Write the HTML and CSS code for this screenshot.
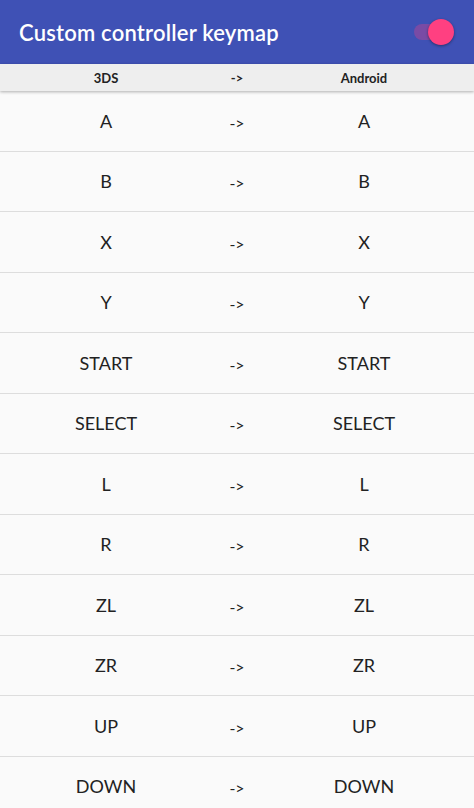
FILE: index.html
```html
<!DOCTYPE html>
<html lang="en">
<head>
    <meta charset="UTF-8">
    <meta name="viewport" content="width=device-width, initial-scale=1.0">
    <title>Custom controller keymap</title>
    <link rel="stylesheet" href="styles.css">
</head>
<body>
    <div class="toolbar">
        <h1 class="titulo">Custom controller keymap</h1>
        <div class="switch">
            <span class="track"></span>
            <span class="thumb"></span>
        </div>
    </div>

    <div class="cabecalho">
        <span class="col">3DS</span>
        <span class="seta">-&gt;</span>
        <span class="col">Android</span>
    </div>

    <div class="lista">
        <div class="linha"><span class="col">A</span><span class="seta">-&gt;</span><span class="col">A</span></div>
        <div class="linha"><span class="col">B</span><span class="seta">-&gt;</span><span class="col">B</span></div>
        <div class="linha"><span class="col">X</span><span class="seta">-&gt;</span><span class="col">X</span></div>
        <div class="linha"><span class="col">Y</span><span class="seta">-&gt;</span><span class="col">Y</span></div>
        <div class="linha"><span class="col">START</span><span class="seta">-&gt;</span><span class="col">START</span></div>
        <div class="linha"><span class="col">SELECT</span><span class="seta">-&gt;</span><span class="col">SELECT</span></div>
        <div class="linha"><span class="col">L</span><span class="seta">-&gt;</span><span class="col">L</span></div>
        <div class="linha"><span class="col">R</span><span class="seta">-&gt;</span><span class="col">R</span></div>
        <div class="linha"><span class="col">ZL</span><span class="seta">-&gt;</span><span class="col">ZL</span></div>
        <div class="linha"><span class="col">ZR</span><span class="seta">-&gt;</span><span class="col">ZR</span></div>
        <div class="linha"><span class="col">UP</span><span class="seta">-&gt;</span><span class="col">UP</span></div>
        <div class="linha"><span class="col">DOWN</span><span class="seta">-&gt;</span><span class="col">DOWN</span></div>
    </div>
</body>
</html>
```

FILE: styles.css
```css
body {
    font-family: Lato, "Open Sans", sans-serif;
    background-color: #fafafa;
    margin: 0;
    height: 808px;
    overflow: hidden;
    color: #222222;
}

.toolbar {
    background-color: #3f51b5;
    height: 64px;
    display: flex;
    align-items: center;
    justify-content: space-between;
    padding: 0 20px 0 19px;
}

.titulo {
    margin: 0;
    color: white;
    font-size: 22px;
    font-weight: 600;
    letter-spacing: 0.2px;
}

.switch {
    position: relative;
    width: 42px;
    height: 28px;
}

.track {
    position: absolute;
    left: 2px;
    top: 6px;
    width: 34px;
    height: 16px;
    border-radius: 8px;
    background-color: rgba(255, 64, 129, 0.3);
}

.thumb {
    position: absolute;
    right: 0;
    top: 1px;
    width: 26px;
    height: 26px;
    border-radius: 50%;
    background-color: #ff4081;
    box-shadow: 0 1px 3px rgba(0, 0, 0, 0.4);
}

.cabecalho {
    display: flex;
    align-items: center;
    height: 27px;
    padding-right: 4px;
    background-color: #eeeeee;
    font-size: 13px;
    font-weight: 700;
    box-shadow: 0 1px 3px rgba(0, 0, 0, 0.3);
    position: relative;
}

.col {
    flex: 1;
    text-align: center;
}

.seta {
    width: 42px;
    padding-left: 4px;
    text-align: center;
}

.linha {
    display: flex;
    align-items: center;
    height: 60.5px;
    padding-right: 4px;
    box-sizing: border-box;
    border-bottom: 1px solid #dddddd;
    font-size: 18px;
}

.linha .seta {
    font-size: 16px;
    padding-top: 3px;
}
```
